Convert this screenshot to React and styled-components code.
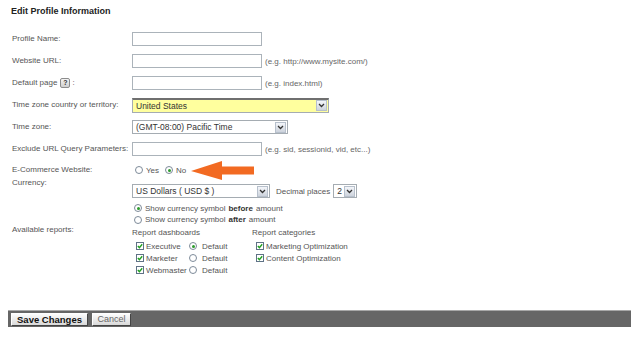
import React from 'react';
import styled, { createGlobalStyle } from 'styled-components';

const GlobalStyle = createGlobalStyle`
    body {
        margin: 0;
        background: #fff;
        font-family: "Liberation Sans", Arial, sans-serif;
    }
`;

const Page = styled.div`
    width: 640px;
    height: 339px;
    padding-top: 5px;
    box-sizing: border-box;
    overflow: hidden;
`;

const Title = styled.h2`
    margin: 0 0 11px 11px;
    font-size: 9px;
    line-height: 12px;
    font-weight: bold;
    color: #222;
`;

const Form = styled.div`
    padding-left: 12px;
`;

const Row = styled.div`
    display: grid;
    grid-template-columns: 120px auto;
    align-items: ${p => p.$top ? 'start' : 'center'};
    height: ${p => p.$h}px;
`;

const Label = styled.div`
    font-size: 8px;
    line-height: 10px;
    color: #555;
    display: flex;
    align-items: center;
    padding-top: ${p => p.$pt || 0}px;
`;

const Field = styled.div`
    display: flex;
    align-items: center;
    gap: 3px;
`;

const Stack = styled.div`
    display: flex;
    flex-direction: column;
`;

const TextInput = styled.div`
    width: 130px;
    height: 14px;
    box-sizing: border-box;
    border: 1px solid #abb3ba;
    background: #fff;
`;

const Hint = styled.span`
    font-size: 8px;
    color: #666;
`;

const Help = styled.span`
    display: inline-flex;
    align-items: center;
    justify-content: center;
    width: 8px;
    height: 8px;
    margin: 0 2px 0 3px;
    border: 1px solid #8c8c8c;
    border-radius: 2px;
    background: linear-gradient(#f4f4f4, #cfcfcf);
    font-size: 7px;
    font-weight: bold;
    color: #333;
`;

const Select = styled.div`
    display: flex;
    align-items: center;
    width: ${p => p.$w}px;
    height: ${p => p.$hl ? 15 : 14}px;
    box-sizing: border-box;
    border: 1px solid #a5acb2;
    border-top-color: ${p => p.$hl ? '#6f6f6f' : '#a5acb2'};
    border-top-width: ${p => p.$hl ? 2 : 1}px;
    background: ${p => p.$hl ? '#ffff9e' : '#fff'};
    margin-top: ${p => p.$mt || 0}px;
`;

const SelectText = styled.span`
    flex: 1;
    padding-left: 3px;
    font-size: 8.5px;
    color: #333;
    white-space: nowrap;
`;

const Arrow = styled.span`
    display: flex;
    align-items: center;
    justify-content: center;
    width: 11px;
    height: 11px;
    margin-right: 1px;
    box-sizing: border-box;
    border: 1px solid #b7c0cc;
    background: linear-gradient(#f4f6fa, #cdd3dc);
`;

const Radio = styled.span`
    position: relative;
    display: inline-block;
    width: 8px;
    height: 8px;
    box-sizing: border-box;
    border: 1px solid #7d8a99;
    border-radius: 50%;
    background: #fff;
    flex-shrink: 0;

    &::after {
        content: "";
        display: ${p => p.$checked ? 'block' : 'none'};
        position: absolute;
        left: 1.5px;
        top: 1.5px;
        width: 3px;
        height: 3px;
        border-radius: 50%;
        background: #2c9b2c;
    }
`;

const Box = styled.span`
    display: inline-flex;
    align-items: center;
    justify-content: center;
    width: 8px;
    height: 8px;
    box-sizing: border-box;
    border: 1px solid #5f7286;
    background: #fff;
    flex-shrink: 0;
`;

const Choice = styled.span`
    display: inline-flex;
    align-items: center;
    gap: ${p => p.$gap || 3}px;
    font-size: 8px;
    color: #555;
    margin-right: ${p => p.$mr || 0}px;
`;

const OptionLine = styled.div`
    display: flex;
    align-items: center;
    gap: 3px;
    height: ${p => p.$h}px;
    padding-left: 2px;
    font-size: 8px;
    color: #555;

    b {
        color: #333;
    }
`;

const Reports = styled.div`
    display: flex;
    padding-top: 4px;
`;

const ReportCol = styled.div`
    width: ${p => p.$w}px;
`;

const ReportHead = styled.div`
    font-size: 8px;
    line-height: 10px;
    color: #555;
    margin-bottom: 2px;
`;

const ReportRow = styled.div`
    display: grid;
    grid-template-columns: ${p => p.$cols};
    align-items: center;
    height: 12px;
    padding-left: 4px;
    font-size: 8px;
    color: #555;
    column-gap: 2px;
`;

const Footer = styled.div`
    display: flex;
    align-items: center;
    gap: 4px;
    width: 623px;
    height: 17px;
    margin: 33px 0 0 8px;
    padding-left: 3px;
    box-sizing: border-box;
    background: #666;
    border-top: 1px solid #a8a8a8;
`;

const Button = styled.button`
    height: 13px;
    width: ${p => p.$w}px;
    padding: 0;
    font-family: "Liberation Sans", Arial, sans-serif;
    font-size: ${p => p.$primary ? 9.5 : 9}px;
    font-weight: ${p => p.$primary ? 'bold' : 'normal'};
    line-height: 11px;
    color: ${p => p.$primary ? '#111' : '#666'};
    background: linear-gradient(#fdfdfd, #d9d9d9);
    border: 1px solid;
    border-color: #fff #444 #444 #fff;
`;

const Chevron = () => (
    <svg width="7" height="5" viewBox="0 0 7 5">
        <path d="M1 1 L3.5 3.5 L6 1" fill="none" stroke="#333" strokeWidth="1.3" />
    </svg>
);

const Check = () => (
    <svg width="6" height="6" viewBox="0 0 6 6">
        <path d="M0.8 3 L2.4 4.6 L5.2 1.2" fill="none" stroke="#22a022" strokeWidth="1.4" />
    </svg>
);

const PointerArrow = () => (
    <svg width="64" height="20" viewBox="0 0 64 20" style={{ marginLeft: 2 }}>
        <path d="M0 11 L31 1 L31 6.5 L63 6.5 L63 14.5 L31 14.5 L31 20 Z" fill="#f26a22" />
    </svg>
);

const Dropdown = ({ w, hl, mt, children }) => (
    <Select $w={w} $hl={hl} $mt={mt}>
        <SelectText>{children}</SelectText>
        <Arrow><Chevron /></Arrow>
    </Select>
);

const dashboards = [
    { name: 'Executive', def: true },
    { name: 'Marketer', def: false },
    { name: 'Webmaster', def: false },
];

export default function App() {
    return (
        <Page>
            <GlobalStyle />
            <Title>Edit Profile Information</Title>

            <Form>
                <Row $h={22}>
                    <Label>Profile Name:</Label>
                    <Field><TextInput /></Field>
                </Row>
                <Row $h={22}>
                    <Label>Website URL:</Label>
                    <Field><TextInput /><Hint>(e.g. http://www.mysite.com/)</Hint></Field>
                </Row>
                <Row $h={22}>
                    <Label>Default page<Help>?</Help>:</Label>
                    <Field><TextInput /><Hint>(e.g. index.html)</Hint></Field>
                </Row>
                <Row $h={22}>
                    <Label>Time zone country or territory:</Label>
                    <Field><Dropdown w={197} hl>United States</Dropdown></Field>
                </Row>
                <Row $h={22}>
                    <Label>Time zone:</Label>
                    <Field><Dropdown w={156}>(GMT-08:00) Pacific Time</Dropdown></Field>
                </Row>
                <Row $h={22}>
                    <Label>Exclude URL Query Parameters:</Label>
                    <Field><TextInput /><Hint>(e.g. sid, sessionid, vid, etc...)</Hint></Field>
                </Row>
                <Row $h={18}>
                    <Label>E-Commerce Website:</Label>
                    <Field>
                        <Choice $mr={3} style={{ marginLeft: 3 }}><Radio />Yes</Choice>
                        <Choice><Radio $checked />No</Choice>
                        <PointerArrow />
                    </Field>
                </Row>
                <Row $h={46} $top>
                    <Label $pt={0}>Currency:</Label>
                    <Stack>
                        <Field>
                            <Select $w={138} $mt={6}>
                                <SelectText>US Dollars ( USD $ )</SelectText>
                                <Arrow><Chevron /></Arrow>
                            </Select>
                            <Hint style={{ marginTop: 6, marginLeft: 3, color: '#555' }}>Decimal places</Hint>
                            <Select $w={24} $mt={6}>
                                <SelectText>2</SelectText>
                                <Arrow><Chevron /></Arrow>
                            </Select>
                        </Field>
                        <OptionLine $h={12} style={{ marginTop: 4 }}>
                            <Radio $checked />Show currency symbol <b>before</b> amount
                        </OptionLine>
                        <OptionLine $h={11}>
                            <Radio />Show currency symbol <b>after</b> amount
                        </OptionLine>
                    </Stack>
                </Row>
                <Row $h={53} $top>
                    <Label $pt={1}>Available reports:</Label>
                    <Reports>
                        <ReportCol $w={120}>
                            <ReportHead>Report dashboards</ReportHead>
                            {dashboards.map(d => (
                                <ReportRow key={d.name} $cols="8px 41px 8px auto">
                                    <Box><Check /></Box>
                                    <span>{d.name}</span>
                                    <Radio $checked={d.def} />
                                    <span style={{ paddingLeft: 3 }}>Default</span>
                                </ReportRow>
                            ))}
                        </ReportCol>
                        <ReportCol $w={150}>
                            <ReportHead>Report categories</ReportHead>
                            {['Marketing Optimization', 'Content Optimization'].map(c => (
                                <ReportRow key={c} $cols="8px auto">
                                    <Box><Check /></Box>
                                    <span>{c}</span>
                                </ReportRow>
                            ))}
                        </ReportCol>
                    </Reports>
                </Row>
            </Form>

            <Footer>
                <Button $primary $w={77}>Save Changes</Button>
                <Button $w={39}>Cancel</Button>
            </Footer>
        </Page>
    );
}
